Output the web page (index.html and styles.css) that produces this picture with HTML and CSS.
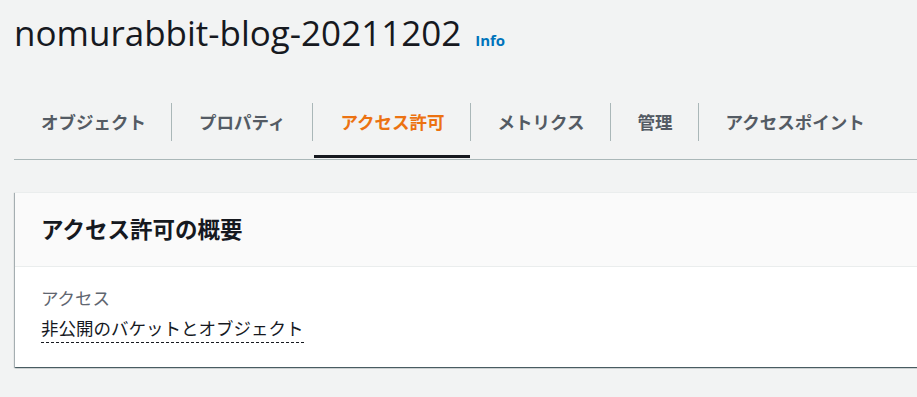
FILE: index.html
```html
<!DOCTYPE html>
<html lang="ja">
<head>
<meta charset="utf-8">
<title>nomurabbit-blog-20211202</title>
<link rel="stylesheet" href="styles.css">
</head>
<body>
<div class="page">
  <header class="page-header">
    <h1 class="title">nomurabbit-blog-20211202</h1>
    <a class="info" href="#">Info</a>
  </header>
  <nav class="tabs">
    <div class="tab">オブジェクト</div>
    <span class="sep"></span>
    <div class="tab wide">プロパティ</div>
    <span class="sep"></span>
    <div class="tab active">アクセス許可</div>
    <span class="sep"></span>
    <div class="tab">メトリクス</div>
    <span class="sep"></span>
    <div class="tab">管理</div>
    <span class="sep"></span>
    <div class="tab">アクセスポイント</div>
  </nav>
  <section class="card">
    <div class="card-header">アクセス許可の概要</div>
    <div class="card-body">
      <div class="label">アクセス</div>
      <div class="value"><span class="dotted">非公開のバケットとオブジェクト</span></div>
    </div>
  </section>
</div>
</body>
</html>
```
FILE: styles.css
```css
html {
  overflow: hidden;
  background: #f2f3f3;
}
body {
  margin: 0;
  padding: 0;
  background: #f2f3f3;
  font-family: "Open Sans", "Noto Sans CJK JP", sans-serif;
  color: #16191f;
}
.page {
  padding-left: 14px;
  padding-bottom: 30px;
  width: 940px;
}
.page-header {
  display: flex;
  align-items: baseline;
  padding-top: 12px;
  height: 91px;
  box-sizing: border-box;
}
.title {
  margin: 0;
  font-size: 35px;
  font-weight: 400;
  line-height: 42px;
  color: #16191f;
}
.info {
  margin-left: 14px;
  font-size: 15px;
  font-weight: 700;
  color: #0073bb;
  text-decoration: none;
}
.tabs {
  display: flex;
  align-items: flex-start;
  margin-top: 12px;
  border-bottom: 1px solid #aab7b8;
}
.tab {
  position: relative;
  padding: 0 25px 18px 27px;
  line-height: 38px;
  font-size: 17.5px;
  font-weight: 700;
  color: #545b64;
  white-space: nowrap;
}
.tab.wide {
  padding-right: 27px;
}
.tab.active {
  color: #ec7211;
}
.tab.active::after {
  content: "";
  position: absolute;
  left: 1px;
  right: 0;
  bottom: 1px;
  height: 3px;
  background: #16191f;
}
.sep {
  width: 1px;
  height: 38px;
  background: #aab7b8;
  flex: none;
}
.card {
  margin-top: 32px;
  margin-left: 1px;
  background: #fff;
  box-shadow: 0 1px 1px 0 rgba(0, 28, 36, 0.5), 1px 1px 1px 0 rgba(0, 28, 36, 0.2), -1px 1px 1px 0 rgba(0, 28, 36, 0.25);
  border-top: 1px solid #eaeded;
}
.card-header {
  background: #fafafa;
  border-bottom: 1px solid #eaeded;
  padding: 22px 26px;
  line-height: 29px;
  font-size: 22.5px;
  font-weight: 700;
  color: #16191f;
}
.card-body {
  padding: 19px 26px 24px;
}
.label {
  font-size: 17.5px;
  line-height: 24px;
  color: #5f6670;
}
.value {
  margin-top: 6px;
  font-size: 17.5px;
  line-height: 24px;
  color: #16191f;
}
.dotted {
  display: inline-block;
  border-bottom: 1px dashed #16191f;
  padding-bottom: 2px;
}
```
